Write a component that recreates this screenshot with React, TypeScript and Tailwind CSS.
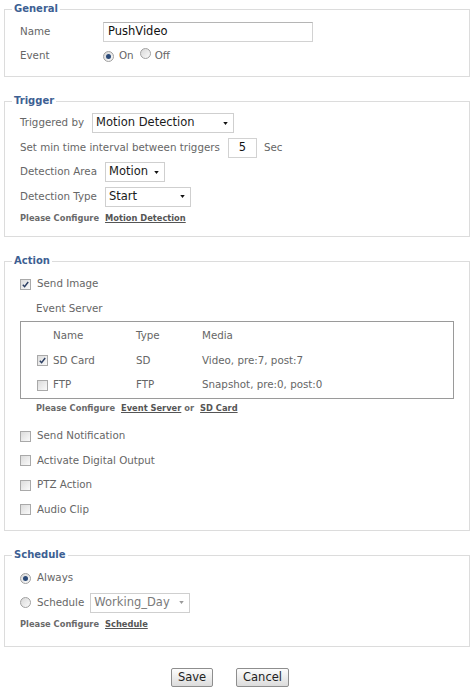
import type { ReactNode } from "react";

const font = "font-['DejaVu_Sans',Verdana,sans-serif]";

function Box({ checked = false }: { checked?: boolean }) {
  return (
    <span className="inline-flex h-[11px] w-[11px] shrink-0 items-center justify-center border border-[#a9a9a9] bg-gradient-to-br from-[#dcdcdc] to-[#fafafa]">
      {checked && (
        <svg viewBox="0 0 10 10" className="h-[9px] w-[9px]" aria-hidden="true">
          <path d="M2 5.2 L4 7.4 L8 2.2" fill="none" stroke="#2c3f63" strokeWidth="1.6" />
        </svg>
      )}
    </span>
  );
}

function Radio({ checked = false }: { checked?: boolean }) {
  return (
    <span className="inline-flex h-[11px] w-[11px] shrink-0 items-center justify-center rounded-full border border-[#a0a0a0] bg-gradient-to-br from-[#d8d8d8] to-[#fbfbfb]">
      {checked && <span className="h-[5px] w-[5px] rounded-full bg-[#2b4a78]" />}
    </span>
  );
}

function Select({ value, w, disabled = false }: { value: string; w: string; disabled?: boolean }) {
  return (
    <span
      className={`inline-flex h-[20px] shrink-0 items-center justify-between border border-[#cfcfcf] bg-white pl-[3px] pr-[5px] text-[11.5px] ${w} ${
        disabled ? "text-[#7a7a7a]" : "text-[#1a1a1a]"
      }`}
    >
      <span className="whitespace-nowrap">{value}</span>
      <svg viewBox="0 0 6 4" className="ml-[4px] h-[3px] w-[5px] shrink-0" aria-hidden="true">
        <path d="M0 0 H6 L3 4 Z" fill={disabled ? "#999" : "#111"} />
      </svg>
    </span>
  );
}

function Section({ title, className, children }: { title: string; className: string; children: ReactNode }) {
  return (
    <fieldset className={`mx-[4px] border border-[#dcdcdc] px-[15px] ${className}`}>
      <legend className="-ml-[8px] px-[2px] text-[10px] leading-[14px] font-bold text-[#3d5f93]">{title}</legend>
      {children}
    </fieldset>
  );
}

function Configure({ children }: { children: ReactNode }) {
  return (
    <div className="flex h-[18px] items-center gap-[6px] text-[8.3px] font-bold text-[#6a6a6a]">
      <span>Please Configure</span>
      {children}
    </div>
  );
}

function Lnk({ children }: { children: ReactNode }) {
  return <span className="text-[#555] underline">{children}</span>;
}

export default function App() {
  return (
    <div className={`${font} min-h-[689px] w-[474px] bg-white pt-[2px] text-[10.3px] text-[#666]`}>
      <Section title="General" className="pt-[4px] pb-[8px]">
        <div className="flex h-[24px] items-center">
          <span className="w-[83px]">Name</span>
          <span className="flex h-[20px] w-[210px] items-center border border-[#d2d2d2] border-t-[#b5b5b5] pl-[4px] text-[11.5px] text-[#111]">
            PushVideo
          </span>
        </div>
        <div className="flex h-[24px] items-center">
          <span className="w-[83px]">Event</span>
          <Radio checked />
          <span className="ml-[5px]">On</span>
          <span className="ml-[6px]"><Radio /></span>
          <span className="ml-[4px]">Off</span>
        </div>
      </Section>

      <Section title="Trigger" className="mt-[17px] pt-[3px] pb-[9px]">
        <div className="flex h-[24px] items-center gap-[8px]">
          <span>Triggered by</span>
          <Select value="Motion Detection" w="w-[142px]" />
        </div>
        <div className="flex h-[25px] items-center">
          <span>Set min time interval between triggers</span>
          <span className="ml-[8px] flex h-[20px] w-[29px] items-center justify-center border border-[#d2d2d2] text-[11.5px] text-[#111]">
            5
          </span>
          <span className="ml-[7px]">Sec</span>
        </div>
        <div className="flex h-[24px] items-center gap-[8px]">
          <span>Detection Area</span>
          <Select value="Motion" w="w-[60px]" />
        </div>
        <div className="flex h-[25px] items-center gap-[8px]">
          <span>Detection Type</span>
          <Select value="Start" w="w-[86px]" />
        </div>
        <Configure>
          <Lnk>Motion Detection</Lnk>
        </Configure>
      </Section>

      <Section title="Action" className="mt-[17px] pt-[4px] pb-[8px]">
        <div className="flex h-[24px] items-center gap-[6px]">
          <Box checked />
          <span>Send Image</span>
        </div>
        <div className="flex h-[25px] items-center pl-[16px]">Event Server</div>
        <div className="border border-[#9a9a9a] py-[1px] pl-[16px]">
          <div className="grid h-[25px] grid-cols-[99px_66px_1fr] items-center">
            <span className="pl-[16px]">Name</span>
            <span>Type</span>
            <span>Media</span>
          </div>
          <div className="grid h-[25px] grid-cols-[99px_66px_1fr] items-center">
            <span className="flex items-center gap-[5px]">
              <Box checked />
              SD Card
            </span>
            <span>SD</span>
            <span>Video, pre:7, post:7</span>
          </div>
          <div className="grid h-[24px] grid-cols-[99px_66px_1fr] items-center">
            <span className="flex items-center gap-[5px]">
              <Box />
              FTP
            </span>
            <span>FTP</span>
            <span>Snapshot, pre:0, post:0</span>
          </div>
        </div>
        <div className="pl-[16px]">
          <Configure>
            <Lnk>Event Server</Lnk>
            <span className="-ml-[3px]">or</span>
            <Lnk>SD Card</Lnk>
          </Configure>
        </div>
        <div className="mt-[7px]">
          {["Send Notification", "Activate Digital Output", "PTZ Action", "Audio Clip"].map((t, i) => (
            <div key={t} className={`flex items-center gap-[6px] ${i % 2 ? "h-[25px]" : "h-[24px]"}`}>
              <Box />
              <span>{t}</span>
            </div>
          ))}
        </div>
      </Section>

      <Section title="Schedule" className="mt-[17px] pt-[4px] pb-[13px]">
        <div className="flex h-[24px] items-center gap-[6px]">
          <Radio checked />
          <span>Always</span>
        </div>
        <div className="flex h-[25px] items-center gap-[6px]">
          <Radio />
          <span>Schedule</span>
          <Select value="Working_Day" w="w-[100px]" disabled />
        </div>
        <Configure>
          <Lnk>Schedule</Lnk>
        </Configure>
      </Section>

      <div className="mt-[21px] flex justify-center gap-[23px] pr-[14px] text-[11.5px] text-[#222]">
        <button className="h-[19px] w-[42px] rounded-[2px] border border-[#8e8e8e] bg-gradient-to-b from-[#fdfdfd] to-[#dcdcdc]">
          Save
        </button>
        <button className="h-[19px] w-[53px] rounded-[2px] border border-[#8e8e8e] bg-gradient-to-b from-[#fdfdfd] to-[#dcdcdc]">
          Cancel
        </button>
      </div>
    </div>
  );
}
